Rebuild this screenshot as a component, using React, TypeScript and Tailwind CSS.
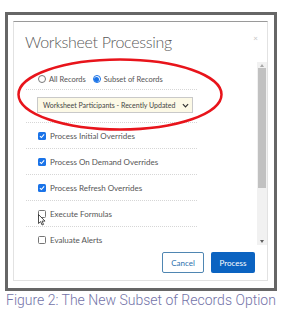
import React from "react";

const rows = [
  { label: "Process Initial Overrides", checked: true },
  { label: "Process On Demand Overrides", checked: true },
  { label: "Process Refresh Overrides", checked: true },
  { label: "Execute Formulas", checked: false },
  { label: "Evaluate Alerts", checked: false },
];

function CheckBox({ checked }: { checked: boolean }) {
  if (checked) {
    return (
      <span className="flex h-[8px] w-[8px] items-center justify-center rounded-[1.5px] bg-[#1a73e8]">
        <svg width="6" height="6" viewBox="0 0 10 10">
          <path d="M1.5 5.2 L4 7.6 L8.6 2.4" fill="none" stroke="white" strokeWidth="1.8" />
        </svg>
      </span>
    );
  }
  return <span className="h-[8px] w-[8px] rounded-[1.5px] border border-[#767676] bg-white" />;
}

export default function App() {
  return (
    <div className="relative h-[321px] w-[291px] overflow-hidden bg-white font-['Lato',sans-serif]">
      {/* screenshot frame */}
      <div className="ml-[5px] mt-[12px] h-[279px] w-[272px] border-[3px] border-[#666666] bg-white">
        <div className="ml-[5px] mt-[6px] flex h-[260px] w-[255px] flex-col border border-[#e2e2e2] border-t-[#9a9a9a]">
          {/* header */}
          <div className="flex h-[40px] items-start justify-between pl-[11px] pr-[9px] pt-[8px]">
            <span className="text-[16px] font-light leading-[24px] tracking-[-0.3px] text-[#5a5a5a]">Worksheet Processing</span>
            <span className="mt-[4px] text-[8px] leading-none text-[#c4c4c4]">×</span>
          </div>

          {/* body */}
          <div className="flex h-[183px]">
            <div className="ml-[12px] w-[171px] text-[8px] text-[#555555]">
              <div className="flex h-[28px] items-end border-b border-dotted border-[#d6d6d6] pb-[4px] pl-[12px] text-[7.5px]">
                <span className="flex items-center gap-[3px]">
                  <span className="h-[8px] w-[8px] rounded-full border border-[#777777] bg-white" />
                  <span>All Records</span>
                </span>
                <span className="ml-[7px] flex items-center gap-[3px]">
                  <span className="flex h-[8px] w-[8px] items-center justify-center rounded-full border border-[#1a73e8] bg-white">
                    <span className="h-[5px] w-[5px] rounded-full bg-[#1a73e8]" />
                  </span>
                  <span>Subset of Records</span>
                </span>
              </div>
              <div className="h-[33px] border-b border-dotted border-[#d6d6d6] pl-[11px] pt-[7px]">
                <div className="flex h-[16px] w-[156px] items-center justify-between whitespace-nowrap border border-[#c9c9c9] bg-[#fcf9e6] pl-[5px] pr-[3px] text-[7px] text-[#444444]">
                  <span>Worksheet Participants - Recently Updated</span>
                  <svg width="7" height="5" viewBox="0 0 8 5">
                    <path d="M1 1 L4 4 L7 1" fill="none" stroke="#333" strokeWidth="1.4" />
                  </svg>
                </div>
              </div>
              {rows.map((r, i) => (
                <div
                  key={r.label}
                  className={
                    "relative flex h-[26px] items-center gap-[4px] pl-[12px] " +
                    (i < rows.length - 1 ? "border-b border-dotted border-[#d6d6d6]" : "")
                  }
                >
                  <CheckBox checked={r.checked} />
                  <span>{r.label}</span>
                  {r.label === "Execute Formulas" && (
                    <svg className="absolute left-[12px] top-[13px]" width="8" height="12" viewBox="0 0 8 12">
                      <path d="M0.5 0.5 L0.5 9.5 L2.6 7.6 L4.1 11 L5.5 10.4 L4.1 7.1 L7 7.1 Z" fill="white" stroke="#222" strokeWidth="0.8" />
                    </svg>
                  )}
                </div>
              ))}
            </div>
            <div className="flex-1" />
            {/* scrollbar */}
            <div className="flex w-[10px] flex-col bg-[#f1f1f1]">
              <div className="flex h-[6px] items-center justify-center">
                <svg width="4" height="3" viewBox="0 0 4 3"><path d="M0 3 L2 0 L4 3 Z" fill="#a8a8a8" /></svg>
              </div>
              <div className="mx-[1px] h-[120px] bg-[#c1c1c1]" />
              <div className="flex-1" />
              <div className="flex h-[7px] items-center justify-center">
                <svg width="4" height="3" viewBox="0 0 4 3"><path d="M0 0 L2 3 L4 0 Z" fill="#606060" /></svg>
              </div>
            </div>
          </div>

          {/* footer */}
          <div className="mt-[7px] flex justify-end gap-[7px] pr-[12px]">
            <button className="h-[21px] w-[42px] rounded-[2px] border border-[#4f86b2] bg-white text-[8px] text-[#2b6fae]">
              Cancel
            </button>
            <button className="h-[21px] w-[44px] rounded-[2px] bg-[#0b63c1] text-[8px] text-white">
              Process
            </button>
          </div>
        </div>
      </div>

      {/* caption */}
      <div className="pl-[6px] font-['Roboto',sans-serif] text-[14px] font-light leading-[18px] text-[#7373a8]">
        Figure 2: The New Subset of Records Option
      </div>

      {/* red annotation */}
      <svg className="pointer-events-none absolute left-0 top-0" width="291" height="321">
        <ellipse cx="120" cy="94.5" rx="101.5" ry="35" fill="none" stroke="#e8141b" strokeWidth="2.5" />
      </svg>
    </div>
  );
}
